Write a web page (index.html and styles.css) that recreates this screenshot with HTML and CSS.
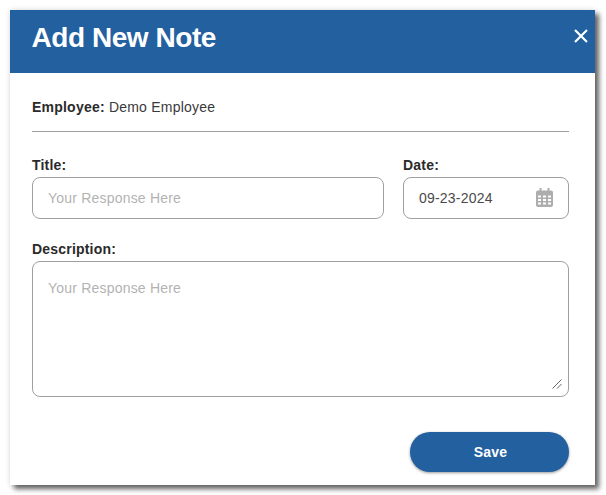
FILE: index.html
```
<!DOCTYPE html>
<html lang="en">
<head>
<meta charset="utf-8">
<title>Add New Note</title>
<link rel="stylesheet" href="styles.css">
</head>
<body>
<div class="modal">
  <header class="modal-header">
    <h1 class="modal-title">Add New Note</h1>
    <button class="close" type="button" aria-label="Close">
      <svg width="16" height="16" viewBox="0 0 16 16"><path d="M2 2 14 14M14 2 2 14" stroke="#fff" stroke-width="2.200" fill="none"/></svg>
    </button>
  </header>
  <div class="modal-body">
    <div class="employee"><strong>Employee:</strong> Demo Employee</div>
    <div class="row">
      <div class="field field-title">
        <label class="label" for="t">Title:</label>
        <input class="control" id="t" type="text" placeholder="Your Response Here">
      </div>
      <div class="field field-date">
        <label class="label" for="d">Date:</label>
        <div class="date-wrap">
          <input class="control" id="d" type="text" value="09-23-2024">
          <svg class="cal" width="17" height="19" viewBox="0 0 17 19"><path fill="#adadad" fill-rule="evenodd" d="M3.500 0h2v2.500h6V0h2v2.500H15a2 2 0 0 1 2 2V17a2 2 0 0 1-2 2H2a2 2 0 0 1-2-2V4.500a2 2 0 0 1 2-2h1.500zM2 7.500v2h3v-2zM7 7.500v2h3v-2zM12 7.500v2h3v-2zM2 11v2h3v-2zM7 11v2h3v-2zM12 11v2h3v-2zM2 14.500v2h3v-2zM7 14.500v2h3v-2zM12 14.500v2h3v-2z"/></svg>
        </div>
      </div>
    </div>
    <div class="field field-desc">
      <label class="label" for="n">Description:</label>
      <div class="area-wrap">
        <textarea class="control area" id="n" placeholder="Your Response Here"></textarea>
        <svg class="grip" width="10" height="10" viewBox="0 0 10 10"><path d="M0.500 9.500 9.500 0.500M5 9.500 9.500 5" stroke="#666" stroke-width="1" fill="none"/></svg>
      </div>
    </div>
    <div class="actions">
      <button class="save" type="button">Save</button>
    </div>
  </div>
</div>
</body>
</html>
```
FILE: styles.css
```
* { box-sizing: border-box; }
html, body { margin: 0; height: 100%; background: #fff; }
body { padding: 10px 11px 10px 10px; font-family: "Liberation Sans", Arial, sans-serif; color: #3a3a3a; }
.modal { width: 585px; height: 475px; background: #fff; box-shadow: 4px 4px 5px rgba(0,0,0,.6), 0 0 6px rgba(0,0,0,.12); }
.modal-header { height: 63px; background: #22609f; display: flex; justify-content: space-between; align-items: flex-start; padding: 0 6px 0 21.500px; }
.modal-title { margin: 12px 0 0; font-size: 28px; line-height: 32px; font-weight: 700; letter-spacing: -.45px; color: #fff; }
.close { margin-top: 18px; padding: 0; border: 0; background: none; width: 16px; height: 16px; display: block; }
.close svg { display: block; }
.modal-body { padding: 26px 26px 0 22px; }
.employee { font-size: 14px; line-height: 16px; letter-spacing: .22px; padding-bottom: 16px; border-bottom: 1px solid #a0a0a0; }
.employee strong { color: #2a2a2a; }
.row { display: flex; gap: 19px; margin-top: 25px; }
.field { display: flex; flex-direction: column; }
.field-title { width: 352px; }
.field-date { width: 166px; }
.field-desc { margin-top: 22px; }
.label { font-size: 14px; line-height: 16px; font-weight: 700; letter-spacing: .2px; color: #2a2a2a; margin-bottom: 4px; }
.control { display: block; width: 100%; height: 42px; border: 1px solid #a0a0a0; border-radius: 8px; background: #fff; padding: 0 15px; font: 14px "Liberation Sans", Arial, sans-serif; letter-spacing: .2px; color: #4a4a4a; outline: 0; }
.control::placeholder { color: #b3b3b3; opacity: 1; }
.date-wrap, .area-wrap { position: relative; }
.cal { position: absolute; right: 16px; top: 11px; }
.area { height: 136px; padding: 18px 15px; resize: none; line-height: 16px; }
.grip { position: absolute; right: 7px; bottom: 8px; }
.actions { display: flex; justify-content: flex-end; margin-top: 35px; }
.save { width: 159px; height: 40px; border: 0; border-radius: 20px; background: #22609f; color: #fff; font: 700 14px "Liberation Sans", Arial, sans-serif; letter-spacing: .2px; padding-left: 8px; box-shadow: 0 1px 3px rgba(0,0,0,.4); }
```
